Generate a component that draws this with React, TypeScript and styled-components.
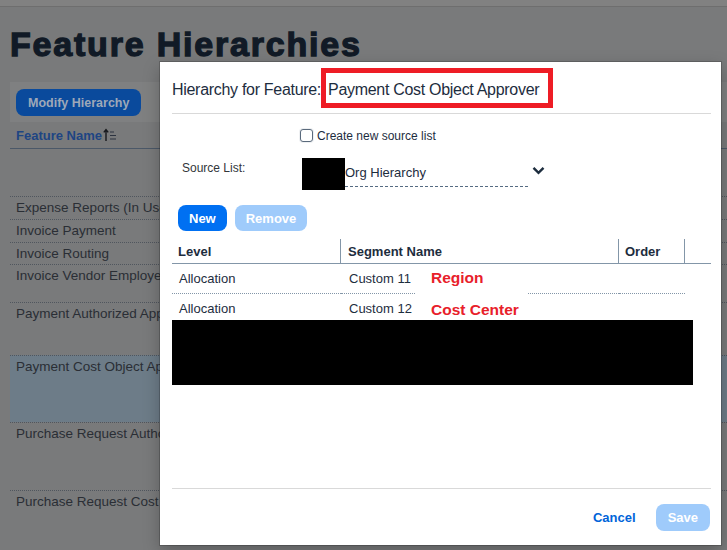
import styled, { createGlobalStyle } from "styled-components";

const GlobalStyle = createGlobalStyle`
  html, body {
    margin: 0;
    padding: 0;
    background: #797a7b;
  }
  body {
    font-family: "Liberation Sans", Arial, sans-serif;
    overflow: hidden;
  }
`;

// background page (already dimmed by the dialog backdrop)
const features = [
  { name: "Expense Reports (In Use)", height: 23 },
  { name: "Invoice Payment", height: 23 },
  { name: "Invoice Routing", height: 22 },
  { name: "Invoice Vendor Employee", height: 38 },
  { name: "Payment Authorized Approver", height: 53 },
  { name: "Payment Cost Object Approver", height: 67, selected: true },
  { name: "Purchase Request Authorized Approver", height: 68 },
  { name: "Purchase Request Cost Object Approver", height: 60 },
];

const segments = [
  { level: "Allocation", name: "Custom 11", note: "Region", masked: true },
  { level: "Allocation", name: "Custom 12", note: "Cost Center", masked: false },
  { level: "", name: "", note: "", masked: false },
  { level: "", name: "", note: "", masked: false },
];

const Screen = styled.div`
  position: relative;
  width: 727px;
  height: 550px;
  overflow: hidden;
  background: #797a7b;
`;

const TopStrip = styled.div`
  height: 6px;
  background: #818181;
  border-bottom: 1px solid #6e6e6e;
`;

const Page = styled.div`
  padding-left: 10px;
`;

const Title = styled.h1`
  margin: 15px 0 0 0;
  font-size: 34px;
  line-height: 44px;
  font-weight: 700;
  color: #111a26;
  -webkit-text-stroke: 1.3px #111a26;
  letter-spacing: 1.8px;
`;

const Toolbar = styled.div`
  margin-top: 16px;
  height: 40px;
  box-sizing: border-box;
  padding: 7px 6px;
  background: #7f8081;
`;

const ModifyButton = styled.button`
  height: 27px;
  padding: 0 12px;
  border: none;
  border-radius: 8px;
  background: #0a4a9c;
  color: #9ea8b8;
  font-family: inherit;
  font-size: 12.5px;
  font-weight: 700;
`;

const ListHeader = styled.div`
  height: 26px;
  display: flex;
  align-items: center;
  padding-left: 6px;
  border-bottom: 1px solid #4b5868;
  color: #1e4583;
  font-size: 13px;
  font-weight: 700;
`;

const SortIcon = () => (
  <svg width="14" height="14" viewBox="0 0 14 14" style={{ marginLeft: 1 }}>
    <path d="M3 13V2M0.8 4.4L3 1.6L5.2 4.4" stroke="#17191d" strokeWidth="1.4" fill="none" />
    <path d="M7 4h4M7 7.5h6M7 11h6" stroke="#2c3340" strokeWidth="1.2" />
  </svg>
);

const ListSpacer = styled.div`
  height: 47px;
`;

const ListRow = styled.div<{ $h: number; $selected?: boolean }>`
  height: ${(p) => p.$h}px;
  box-sizing: border-box;
  border-top: 1px dotted #50565e;
  padding: 3px 0 0 6px;
  background: ${(p) => (p.$selected ? "#6d7c88" : "transparent")};
  color: #2a2e35;
  font-size: 13.5px;
  line-height: 16px;
  white-space: nowrap;
`;

// dialog
const Dialog = styled.div`
  position: absolute;
  left: 160px;
  top: 62px;
  width: 561px;
  height: 483px;
  background: #ffffff;
  box-shadow: 0 0 0 1px rgba(0, 0, 0, 0.18), 0 6px 16px rgba(0, 0, 0, 0.25);
  display: flex;
  flex-direction: column;
  color: #1d2d3e;
`;

const DialogHeader = styled.div`
  height: 51px;
  display: flex;
  align-items: center;
  padding-left: 12px;
  font-size: 16px;
  letter-spacing: -0.3px;
  white-space: nowrap;
`;

const HeaderText = styled.span`
  padding-top: 5px;
`;

const Marked = styled.span`
  display: inline-flex;
  align-items: center;
  height: 40px;
  box-sizing: border-box;
  padding: 5px 9px 0 2px;
  border: 5px solid #ee1c25;
`;

const Divider = styled.div`
  height: 1px;
  margin: 0 10px 0 12px;
  background: #d9d9d9;
`;

const Body = styled.div`
  flex: 1;
  padding: 0 10px 0 12px;
`;

const CheckRow = styled.label`
  display: flex;
  align-items: center;
  gap: 4px;
  margin-top: 14px;
  padding-left: 128px;
  height: 15px;
  font-size: 12px;
`;

const CheckBox = styled.span`
  width: 13px;
  height: 13px;
  box-sizing: border-box;
  border: 1px solid #5a6a7c;
  border-radius: 3px;
  background: #fff;
  box-shadow: 0 0 0 1px #eef0f2;
`;

const SourceRow = styled.div`
  display: grid;
  grid-template-columns: 128px 1fr;
  margin-top: 15px;
  height: 32px;
`;

const FieldLabel = styled.div`
  padding: 3px 0 0 10px;
  font-size: 12px;
  line-height: 14px;
  color: #32363a;
`;

const Field = styled.div`
  display: flex;
  align-items: flex-start;
  padding-left: 2px;
`;

const Redacted = styled.div<{ $w: number; $h: number }>`
  width: ${(p) => p.$w}px;
  height: ${(p) => p.$h}px;
  background: #000;
`;

const SelectValue = styled.div`
  width: 183px;
  height: 28px;
  display: flex;
  align-items: center;
  border-bottom: 1px dashed #556b82;
  font-size: 13px;
`;

const Chevron = () => (
  <svg width="13" height="9" viewBox="0 0 13 9" style={{ marginLeft: 4, marginTop: 8 }}>
    <path d="M1.5 1.8L6.5 6.8L11.5 1.8" stroke="#1d2d3e" strokeWidth="2.4" fill="none" />
  </svg>
);

const ButtonRow = styled.div`
  display: flex;
  gap: 8px;
  margin-top: 15px;
  padding-left: 6px;
`;

const Button = styled.button<{ $disabled?: boolean }>`
  height: 26px;
  padding: 0 11px;
  border: none;
  border-radius: 8px;
  background: ${(p) => (p.$disabled ? "#9fcbfb" : "#0070f2")};
  color: #ffffff;
  font-family: inherit;
  font-size: 13px;
  font-weight: 700;
`;

const Table = styled.div`
  margin-top: 8px;
`;

const cols = "169px 278px 66px 26px";

const HeadRow = styled.div`
  display: grid;
  grid-template-columns: ${cols};
  height: 25px;
  box-sizing: border-box;
  border-bottom: 1px solid #8396a8;
`;

const HeadCell = styled.div<{ $sep?: boolean; $pad: number }>`
  display: flex;
  align-items: center;
  padding-left: ${(p) => p.$pad}px;
  border-right: ${(p) => (p.$sep ? "1px solid #8396a8" : "none")};
  font-size: 13px;
  font-weight: 700;
`;

const TableBody = styled.div`
  position: relative;
`;

const Row = styled.div`
  display: grid;
  grid-template-columns: ${cols};
  height: 30px;
`;

const Cell = styled.div<{ $line?: boolean; $pad: number }>`
  position: relative;
  display: flex;
  align-items: center;
  box-sizing: border-box;
  padding-left: ${(p) => p.$pad}px;
  border-bottom: ${(p) => (p.$line ? "1px dotted #8396a8" : "none")};
  font-size: 13px;
`;

// red notes written over the table, the first one blanks out part of the row line
const Note = styled.span<{ $masked: boolean }>`
  position: absolute;
  left: 75px;
  top: ${(p) => (p.$masked ? "0" : "2px")};
  height: 31px;
  box-sizing: border-box;
  display: flex;
  align-items: center;
  padding: 0 44px 3px 15px;
  background: ${(p) => (p.$masked ? "#fff" : "transparent")};
  color: #e8202a;
  font-size: 15.5px;
  font-weight: 700;
`;

const RowsMask = styled.div`
  position: absolute;
  left: 0;
  top: 56px;
  width: 521px;
  height: 65px;
  background: #000;
`;

const Footer = styled.div`
  display: flex;
  justify-content: flex-end;
  align-items: center;
  gap: 20px;
  padding: 15px 11px 14px 0;
`;

const TextButton = styled.button`
  border: none;
  background: none;
  padding: 0;
  color: #0064d9;
  font-family: inherit;
  font-size: 13px;
  font-weight: 700;
`;

const SaveButton = styled(Button)`
  height: 27px;
  padding: 0 12px;
`;

const App = () => {
  return (
    <>
      <GlobalStyle />
      <Screen>
        <TopStrip />
        <Page>
          <Title>Feature Hierarchies</Title>
          <Toolbar>
            <ModifyButton>Modify Hierarchy</ModifyButton>
          </Toolbar>
          <ListHeader>
            Feature Name
            <SortIcon />
          </ListHeader>
          <ListSpacer />
          {features.map((f) => (
            <ListRow key={f.name} $h={f.height} $selected={f.selected}>
              {f.name}
            </ListRow>
          ))}
        </Page>

        <Dialog>
          <DialogHeader>
            <HeaderText>Hierarchy for Feature:</HeaderText>
            <Marked>Payment Cost Object Approver</Marked>
          </DialogHeader>
          <Divider />
          <Body>
            <CheckRow>
              <CheckBox />
              Create new source list
            </CheckRow>
            <SourceRow>
              <FieldLabel>Source List:</FieldLabel>
              <Field>
                <Redacted $w={43} $h={32} />
                <SelectValue>Org Hierarchy</SelectValue>
                <Chevron />
              </Field>
            </SourceRow>
            <ButtonRow>
              <Button>New</Button>
              <Button $disabled>Remove</Button>
            </ButtonRow>
            <Table>
              <HeadRow>
                <HeadCell $sep $pad={6}>Level</HeadCell>
                <HeadCell $sep $pad={7}>Segment Name</HeadCell>
                <HeadCell $sep $pad={6}>Order</HeadCell>
                <HeadCell $pad={0} />
              </HeadRow>
              <TableBody>
                {segments.map((s, i) => (
                  <Row key={i}>
                    <Cell $line $pad={7}>{s.level}</Cell>
                    <Cell $line $pad={8}>
                      {s.name}
                      {s.note && <Note $masked={s.masked}>{s.note}</Note>}
                    </Cell>
                    <Cell $line $pad={6} />
                    <Cell $pad={0} />
                  </Row>
                ))}
                <RowsMask />
              </TableBody>
            </Table>
          </Body>
          <Divider />
          <Footer>
            <TextButton>Cancel</TextButton>
            <SaveButton $disabled>Save</SaveButton>
          </Footer>
        </Dialog>
      </Screen>
    </>
  );
};

export default App;
